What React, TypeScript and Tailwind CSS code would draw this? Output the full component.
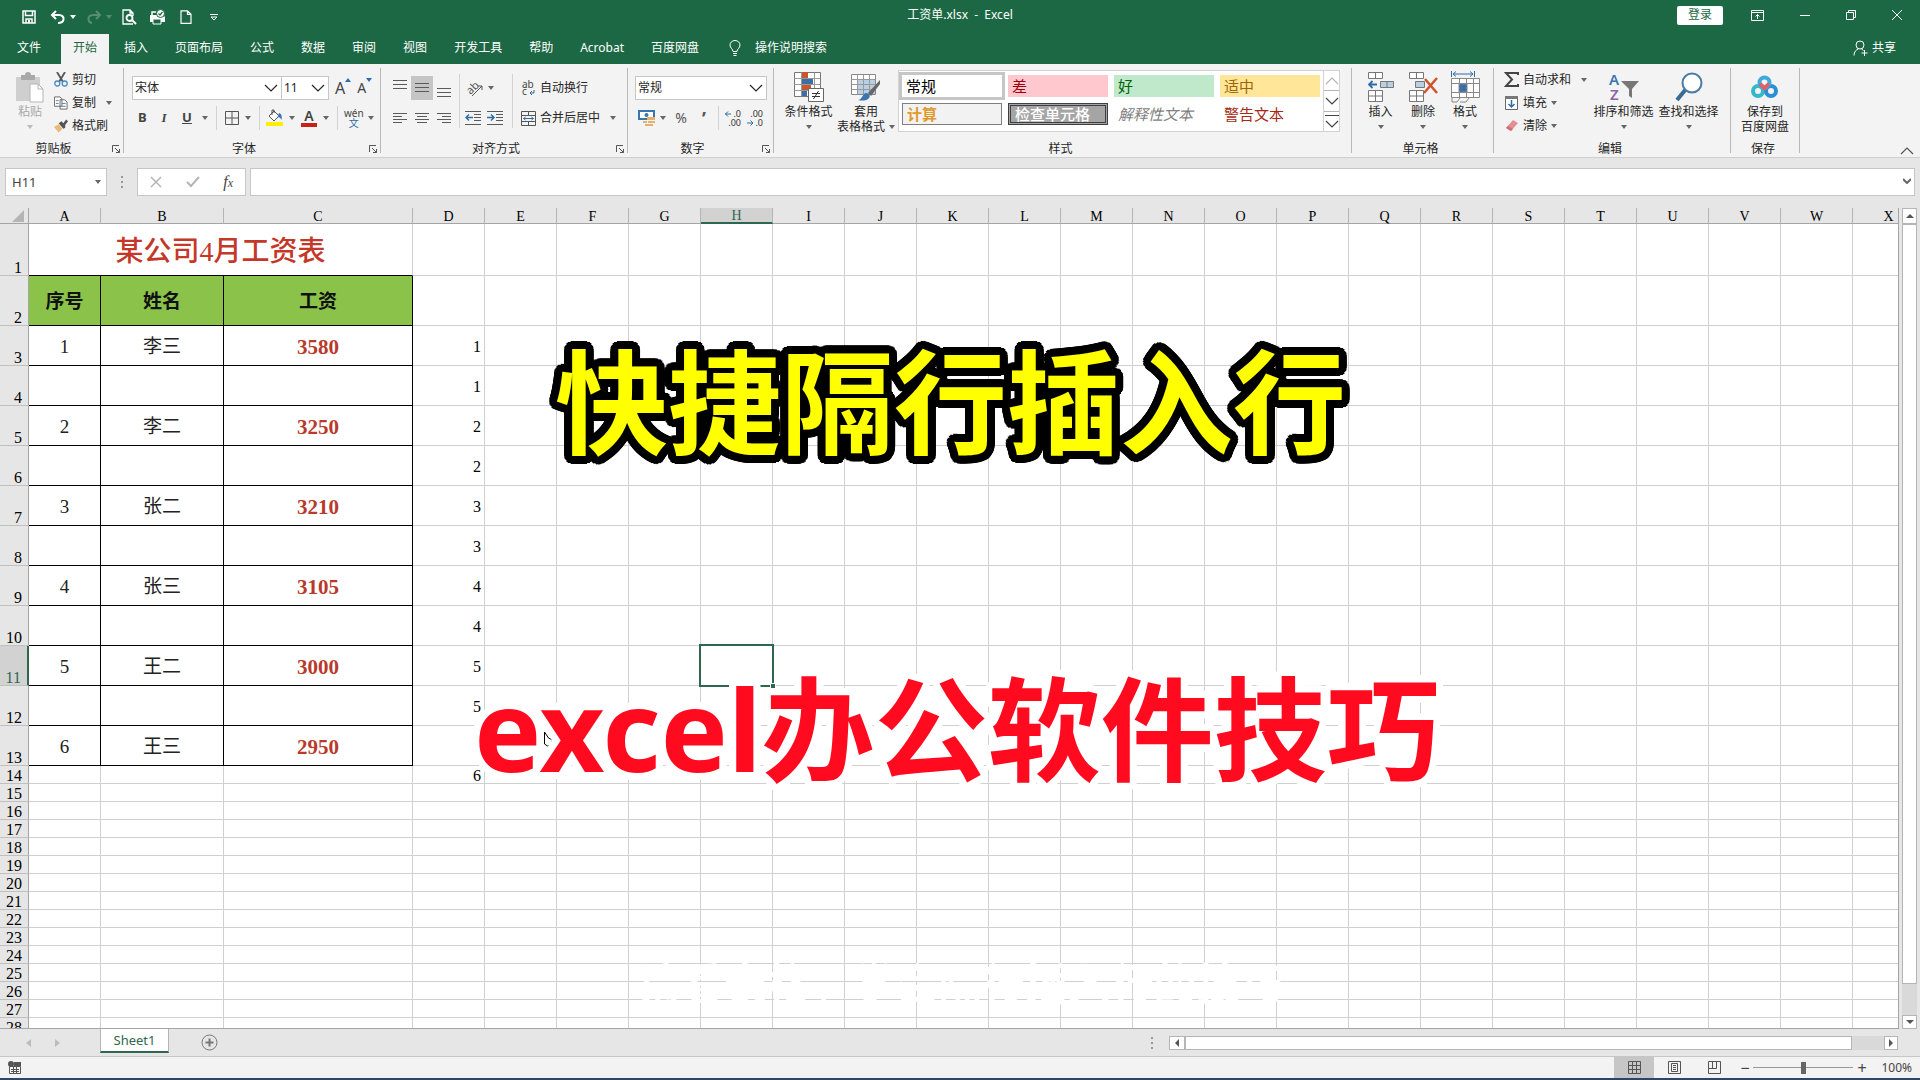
import type { ReactNode } from "react";

const MENU_TABS = ["开始", "插入", "页面布局", "公式", "数据", "审阅", "视图", "开发工具", "帮助", "Acrobat", "百度网盘"];

const COLUMNS = "ABCDEFGHIJKLMNOPQRSTUVWX".split("");
const ROWS = Array.from({ length: 28 }, (_, i) => i + 1);

const SALARIES: Record<number, [string, string, string]> = {
  3: ["1", "李三", "3580"],
  5: ["2", "李二", "3250"],
  7: ["3", "张二", "3210"],
  9: ["4", "张三", "3105"],
  11: ["5", "王二", "3000"],
  13: ["6", "王三", "2950"],
};

const HELPER: Record<number, string> = {
  3: "1", 4: "1", 5: "2", 6: "2", 7: "3", 8: "3", 9: "4", 10: "4", 11: "5", 12: "5", 13: "6", 14: "6",
};

const CELL_STYLES = [
  { label: "常规", className: "bg-white text-black outline-3 outline-[#c6c6c6]" },
  { label: "差", className: "bg-[#ffc7ce] text-[#9c0006]" },
  { label: "好", className: "bg-[#c0e8cb] text-[#006100]" },
  { label: "适中", className: "bg-[#ffe699] text-[#9c6500]" },
  { label: "计算", className: "border border-[#7f7f7f] bg-[#f2f2f2] font-bold text-[#e09a2b]" },
  { label: "检查单元格", className: "border-3 border-double border-[#3f3f3f] bg-[#a5a5a5] font-medium text-white" },
  { label: "解释性文本", className: "text-[#7f7f7f] italic" },
  { label: "警告文本", className: "text-[#a52a14]" },
];

// Rounded text outline: two rings of hard shadows around each glyph.
function outline(radius: number, color: string) {
  return [radius, radius / 2]
    .flatMap((r) =>
      Array.from({ length: 32 }, (_, i) => {
        const a = (i * Math.PI) / 16;
        return `${(Math.cos(a) * r).toFixed(1)}px ${(Math.sin(a) * r).toFixed(1)}px 0 ${color}`;
      }),
    )
    .join(",");
}

function Caret({ className = "" }: { className?: string }) {
  return (
    <svg viewBox="0 0 6 4" className={`h-1 w-1.5 shrink-0 ${className}`} fill="#666">
      <path d="M0 0h6L3 4z" />
    </svg>
  );
}

function Chevron({ up = false, className = "" }: { up?: boolean; className?: string }) {
  return (
    <svg viewBox="0 0 14 8" className={`h-2 w-3.5 shrink-0 ${className}`} fill="none" stroke="currentColor" strokeWidth="1.2">
      <path d={up ? "M1 7l6-6 6 6" : "M1 1l6 6 6-6"} />
    </svg>
  );
}

function Divider() {
  return <div className="h-6 w-px shrink-0 bg-[#d2d2d2]" />;
}

function Group({
  label,
  launcher = false,
  className,
  children,
}: {
  label: string;
  launcher?: boolean;
  className: string;
  children: ReactNode;
}) {
  return (
    <section className={`flex shrink-0 ${className}`}>
      <div className="flex min-w-0 flex-1 flex-col">
        <div className="min-h-0 flex-1">{children}</div>
        <div className="flex h-4 items-center">
          <span className="flex-1 pr-1 text-center leading-4">{label}</span>
          {launcher && (
            <button aria-label={`${label}设置`} className="mr-0.5 w-2.5">
              <svg viewBox="0 0 10 10" className="size-2.5" fill="none" stroke="#555">
                <path d="M1.5 8V1.5H8M4 4l4.500 4.500M8.500 5v3.500H5" />
              </svg>
            </button>
          )}
        </div>
      </div>
      <div className="mb-1 w-px bg-[#b8b8b8]" />
    </section>
  );
}

function BigButton({ icon, lines, caret = true, className = "" }: { icon: ReactNode; lines: string[]; caret?: boolean; className?: string }) {
  return (
    <button className={`flex shrink-0 flex-col items-center ${className}`}>
      <span className="flex h-[34px] w-8 items-center justify-center">{icon}</span>
      {lines.map((line, i) => (
        <span key={line} className="flex items-center gap-1 leading-[15px] whitespace-nowrap">
          {line}
          {caret && lines.length > 1 && i === lines.length - 1 && <Caret />}
        </span>
      ))}
      {caret && lines.length === 1 && <Caret className="mt-1.5" />}
    </button>
  );
}

function Lines({ d, label, active = false }: { d: string; label: string; active?: boolean }) {
  return (
    <button aria-label={label} className={`flex h-6 w-[22px] items-center justify-center ${active ? "bg-[#c5c5c5]" : ""}`}>
      <svg viewBox="0 0 14 20" className="h-5 w-3.5" stroke="#5a5a5a">
        <path d={d} />
      </svg>
    </button>
  );
}

function Indent({ label, flip = false }: { label: string; flip?: boolean }) {
  return (
    <button aria-label={label} className="flex w-[22px] justify-center">
      <svg viewBox="0 0 16 14" className="h-3.5 w-4" fill="none" stroke="#5a5a5a">
        <path d="M0 .5h16M9 3.500h7M9 6.500h7M9 9.500h7M0 13.500h16" />
        <path d={flip ? "M0 6.500h7M4 3.500l3 3-3 3" : "M1 6.500h7M4 3.500l-3 3 3 3"} stroke="#2f6da8" strokeWidth="1.5" />
      </svg>
    </button>
  );
}

function TitleBar() {
  return (
    <header className="grid h-[34px] grid-cols-[1fr_auto_1fr] items-center pb-1 text-white">
      <div className="flex items-center pt-1 pl-[22px]">
        <button aria-label="保存" className="mr-3.5">
          <svg viewBox="0 0 14 14" className="size-3.5" fill="none" stroke="#fff" strokeWidth="1.5">
            <path d="M1 1h12v12H1zM3.500 1v4.500h7V1M4 13V9h6v4" />
            <path d="M6 10h2v3H6z" fill="#fff" stroke="none" />
          </svg>
        </button>
        <button aria-label="撤消" className="mr-2.5 flex items-center gap-1">
          <svg viewBox="0 0 16 14" className="h-3.5 w-4" fill="none" stroke="#fff" strokeWidth="2">
            <path d="M6 1L2 5l4 4M2 5h7c3 0 5 2 4.500 4.500S11 13 8 13" />
          </svg>
          <svg viewBox="0 0 6 4" className="h-1 w-1.5" fill="#fff"><path d="M0 0h6L3 4z" /></svg>
        </button>
        <button aria-label="恢复" className="mr-2.5 flex items-center gap-1 opacity-25">
          <svg viewBox="0 0 16 14" className="h-3.5 w-4" fill="none" stroke="#fff" strokeWidth="2">
            <path d="M10 1l4 4-4 4M14 5H7C4 5 2 7 2.500 9.500S5 13 6 13" />
          </svg>
          <svg viewBox="0 0 6 4" className="h-1 w-1.5" fill="#fff"><path d="M0 0h6L3 4z" /></svg>
        </button>
        <button aria-label="打印预览" className="mr-3">
          <svg viewBox="0 0 15 16" className="h-4 w-[15px]" fill="none" stroke="#fff" strokeWidth="1.300">
            <path d="M11 15H1V1h7l3 3v3M8 1v3h3" />
            <circle cx="7.500" cy="9" r="3" strokeWidth="1.800" />
            <path d="M10 11l4 4" strokeWidth="2" />
          </svg>
        </button>
        <button aria-label="快速打印" className="mr-3.5">
          <svg viewBox="0 0 17 16" className="h-4 w-[17px]">
            <path d="M1 6h13l2 2v5H1z" fill="#fff" />
            <path d="M4 10h8v5H4z" fill="#1c6844" stroke="#fff" />
            <path d="M3 6V3h4" fill="none" stroke="#fff" strokeWidth="1.500" />
            <circle cx="11.500" cy="4.500" r="4" fill="#fff" stroke="#1c6844" />
            <path d="M9.500 4.500l1.500 1.500 2.500-3" fill="none" stroke="#1c6844" strokeWidth="1.200" />
          </svg>
        </button>
        <button aria-label="新建" className="mr-[18px]">
          <svg viewBox="0 0 12 14" className="h-3.5 w-3" fill="none" stroke="#fff" strokeWidth="1.200">
            <path d="M1 .8h6.500L11 4.300v9H1zM7.500.8v3.500H11" />
          </svg>
        </button>
        <button aria-label="自定义快速访问工具栏">
          <svg viewBox="0 0 8 7" className="h-[7px] w-2" fill="none" stroke="#fff">
            <path d="M0 .5h8M1 3l3 3 3-3z" />
          </svg>
        </button>
      </div>
      <h1 className="whitespace-pre">{"工资单.xlsx  -  Excel"}</h1>
      <div className="flex items-center justify-end pr-[18px]">
        <button className="mr-7 h-[19px] w-[46px] rounded-xs bg-white text-[#1c6844]">登录</button>
        <button aria-label="功能区显示选项" className="mr-9">
          <svg viewBox="0 0 13 11" className="h-[11px] w-[13px]" fill="none" stroke="#fff">
            <path d="M.5.5h12v10H.5zM.5 2.500h12M6.500 9V4.500M4.500 6.500l2-2 2 2" />
          </svg>
        </button>
        <button aria-label="最小化" className="mr-9">
          <svg viewBox="0 0 10 10" className="size-2.5" stroke="#fff"><path d="M0 5.500h10" /></svg>
        </button>
        <button aria-label="向下还原" className="mr-9">
          <svg viewBox="0 0 10 10" className="size-2.5" fill="none" stroke="#fff">
            <path d="M.5 2.500h7v7h-7zM2.500 2.500v-2h7v7h-2" />
          </svg>
        </button>
        <button aria-label="关闭">
          <svg viewBox="0 0 10 10" className="size-2.5" stroke="#fff"><path d="M0 0l10 10M10 0L0 10" /></svg>
        </button>
      </div>
    </header>
  );
}

function MenuBar() {
  return (
    <nav className="flex h-[30px] items-center pl-[5px] text-white">
      <button className="mr-2 h-full px-3 pb-0.5">文件</button>
      <div className="flex h-full gap-[3px]">
        {MENU_TABS.map((tab, i) => (
          <button key={tab} className={i === 0 ? "bg-[#f3f3f3] px-3 pb-0.5 text-[#1c6844]" : "px-3 pb-0.5"}>
            {tab}
          </button>
        ))}
      </div>
      <button className="ml-[18px] flex h-full items-center gap-3.5 pb-0.5">
        <svg viewBox="0 0 12 16" className="h-4 w-3" fill="none" stroke="#fff">
          <path d="M4 11.500C4 9 1 8 1 5a5 4.500 0 0 1 10 0c0 3-3 4-3 6.500zM4 13.500h4M4.500 15.500h3" />
        </svg>
        操作说明搜索
      </button>
      <button className="mr-6 ml-auto flex h-full items-center gap-1 pb-0.5">
        <svg viewBox="0 0 15 16" className="h-4 w-[15px]" fill="none" stroke="#fff">
          <circle cx="7" cy="5" r="4" />
          <path d="M1 15.500C1 12 3 9.500 5.500 9M8.500 9l2 1.500M11.500 10v6M8.500 13h6" />
        </svg>
        共享
      </button>
    </nav>
  );
}

function ClipboardGroup() {
  return (
    <Group label="剪贴板" launcher className="w-[124px]">
      <div className="flex h-full pl-3.5">
        <button className="flex w-8 flex-col items-center pt-1 text-[#a8a8a8]">
          <svg viewBox="0 0 28 30" className="h-8 w-7">
            <path d="M0 4h24v24H0z" fill="#cfcfcf" />
            <path d="M5 2h4a3 3 0 0 1 6 0h4v5H5z" fill="#a9a9a9" />
            <path d="M14 11h8l5 5v13H14z" fill="#fff" stroke="#b5b5b5" />
            <path d="M22 11v5h5" fill="none" stroke="#b5b5b5" />
          </svg>
          <span className="leading-[15px]">粘贴</span>
          <Caret className="mt-1.5 opacity-40" />
        </button>
        <div className="ml-2 flex flex-col">
          <button className="flex h-[23px] items-center gap-1">
            <svg viewBox="0 0 14 15" className="h-[15px] w-3.5" fill="none">
              <path d="M3 0l6 10M11 0L5 10" stroke="#555" strokeWidth="1.800" />
              <circle cx="3.300" cy="11.500" r="2.500" stroke="#4a8cc4" strokeWidth="1.300" />
              <circle cx="10.700" cy="11.500" r="2.500" stroke="#4a8cc4" strokeWidth="1.300" />
            </svg>
            剪切
          </button>
          <button className="flex h-[23px] items-center gap-1">
            <svg viewBox="0 0 15 14" className="h-3.5 w-3.5" fill="#fff" stroke="#666">
              <path d="M.5.500h6l2 2v8h-8zM6.500 3.500h5l2.500 2.500v7.500H6.500z" />
              <path d="M2 4.500h3M2 7.500h3M8.500 7.500h4M8.500 10.500h4" stroke="#4a7db0" />
            </svg>
            复制
            <Caret className="ml-1.5" />
          </button>
          <button className="flex h-[23px] items-center gap-1">
            <svg viewBox="0 0 15 14" className="h-3.5 w-3.5">
              <path d="M0 8l5-3 4 5-4 4z" fill="#e9b97a" />
              <path d="M5 4l3-2 2 2 3-4 2 2-3 4 0 3-2 1z" fill="#555" />
            </svg>
            格式刷
          </button>
        </div>
      </div>
    </Group>
  );
}

function FontGroup() {
  return (
    <Group label="字体" launcher className="w-[257px]">
      <div className="flex h-[35px] items-center pt-1 pl-2">
        <div className="relative">
          <select aria-label="字体" className="block h-6 w-[150px] appearance-none border border-[#c6c6c6] bg-white pl-0.5 text-xs">
            <option>宋体</option>
          </select>
          <Chevron className="pointer-events-none absolute top-2 right-1" />
        </div>
        <div className="relative">
          <select aria-label="字号" className="-ml-px block h-6 w-12 appearance-none border border-[#c6c6c6] bg-white pl-0.5 text-xs">
            <option>11</option>
          </select>
          <Chevron className="pointer-events-none absolute top-2 right-1" />
        </div>
        <button aria-label="增大字号" className="ml-1.5 flex text-base leading-5 text-[#444]">
          A
          <svg viewBox="0 0 6 4" className="h-1 w-1.5" fill="#2f6da8"><path d="M0 4h6L3 0z" /></svg>
        </button>
        <button aria-label="减小字号" className="ml-1.5 flex text-sm leading-5 text-[#444]">
          A
          <svg viewBox="0 0 6 4" className="h-1 w-1.5" fill="#2f6da8"><path d="M0 0h6L3 4z" /></svg>
        </button>
      </div>
      <div className="flex h-[30px] items-center pl-3.5 text-[13px] text-[#444]">
        <button aria-label="加粗" className="w-2 font-bold">B</button>
        <button aria-label="倾斜" className="ml-3.5 w-2 font-['Liberation_Serif',serif] font-bold italic">I</button>
        <button aria-label="下划线" className="ml-3.5 w-2.5 font-bold underline">U</button>
        <Caret className="mr-2 ml-2.5" />
        <Divider />
        <button aria-label="边框" className="ml-2 flex items-center gap-1.5">
          <svg viewBox="0 0 14 14" className="size-3.5" fill="none" stroke="#555">
            <path d="M.5.500h13v13H.5zM7 .5v13M.5 7h13" />
          </svg>
          <Caret />
        </button>
        <div className="ml-2"><Divider /></div>
        <button aria-label="填充颜色" className="ml-1.5 flex items-center gap-1.5">
          <svg viewBox="0 0 17 18" className="h-[18px] w-[17px]">
            <path d="M3 7l5-5 5 5-5 5z" fill="#fff" stroke="#555" />
            <path d="M6 6V1h2v3" fill="none" stroke="#555" />
            <path d="M13 4c3 1 3 4 2.500 7-1-2-2-3-4-3z" fill="#3a75b0" />
            <path d="M0 13h17v4H0z" fill="#ffee00" />
          </svg>
          <Caret />
        </button>
        <button aria-label="字体颜色" className="ml-1.5 flex items-center gap-1.5">
          <span className="w-4 border-b-4 border-[#c8201a] text-center text-sm leading-[14px] font-semibold">A</span>
          <Caret />
        </button>
        <div className="ml-2"><Divider /></div>
        <button aria-label="拼音指南" className="ml-1.5 flex items-center gap-1">
          <span className="flex flex-col text-[10px] leading-[10px]">
            wén<span className="text-[#2f6da8]">文</span>
          </span>
          <Caret />
        </button>
      </div>
    </Group>
  );
}

function AlignGroup() {
  return (
    <Group label="对齐方式" launcher className="w-[247px]">
      <div className="flex h-full pl-2">
        <div className="flex w-[70px] flex-col">
          <div className="flex h-[35px] items-center pt-1">
            <Lines label="顶端对齐" d="M0 2.500h14M0 6.500h14M0 10.500h14" />
            <Lines label="垂直居中" active d="M0 5.500h14M0 9.500h14M0 13.500h14" />
            <Lines label="底端对齐" d="M0 10.500h14M0 14.500h14M0 18.500h14" />
          </div>
          <div className="flex h-[30px] items-center">
            <Lines label="左对齐" d="M0 5.500h14M0 8.500h9M0 11.500h14M0 14.500h9" />
            <Lines label="居中" d="M0 5.500h14M2 8.500h10M0 11.500h14M2 14.500h10" />
            <Lines label="右对齐" d="M0 5.500h14M5 8.500h9M0 11.500h14M5 14.500h9" />
          </div>
        </div>
        <div className="mt-1.5 h-[54px] w-px bg-[#d2d2d2]" />
        <div className="flex w-[52px] flex-col pl-0.5">
          <button aria-label="方向" className="flex h-[35px] items-center gap-1 pt-1 pl-1">
            <svg viewBox="0 0 18 16" className="h-4 w-[18px] overflow-visible" fill="none" stroke="#555">
              <text x="0" y="12" transform="rotate(-45 6 8)" fontSize="11" fill="#555" stroke="none">ab</text>
              <path d="M6 16L16 6M12 6h4v4" />
            </svg>
            <Caret />
          </button>
          <div className="flex h-[30px] items-center">
            <Indent label="减少缩进量" />
            <Indent label="增加缩进量" flip />
          </div>
        </div>
        <div className="mt-1.5 h-[54px] w-px bg-[#d2d2d2]" />
        <div className="flex flex-col pl-2">
          <button className="flex h-[35px] items-center gap-1 pt-1">
            <svg viewBox="0 0 15 16" className="h-4 w-[15px] overflow-visible" fill="none" stroke="#2f6da8">
              <text x="1" y="8" fontSize="10" fill="#444" stroke="none">ab</text>
              <text x="1" y="15" fontSize="10" fill="#444" stroke="none">c</text>
              <path d="M13 10v3H9M11 11l-2 2 2 2" />
            </svg>
            自动换行
          </button>
          <button className="flex h-[30px] items-center gap-1">
            <svg viewBox="0 0 15 15" className="size-[15px]" fill="none" stroke="#555">
              <path d="M.5.500h14v14H.5zM.5 4.500h14M.5 10.500h14M7.500.500v4M7.500 10.500v4" />
              <path d="M2.500 7.500h10M4.500 6l-2 1.500 2 1.500M10.500 6l2 1.500-2 1.500" stroke="#2f6da8" />
            </svg>
            合并后居中
            <Caret className="ml-1.5" />
          </button>
        </div>
      </div>
    </Group>
  );
}

function Decimals({ label, top, bottom, grow = false }: { label: string; top: string; bottom: string; grow?: boolean }) {
  return (
    <button aria-label={label} className="w-[22px]">
      <svg viewBox="0 0 16 16" className="size-4 overflow-visible" fill="none" stroke="#2f6da8">
        <text x="16" y="7" textAnchor="end" fontSize="9" fill="#333" stroke="none">{top}</text>
        <text x="16" y="16" textAnchor="end" fontSize="9" fill="#333" stroke="none">{bottom}</text>
        <path d={grow ? "M0 4h6M3 1.500L.5 4 3 6.500" : "M0 13h6M3.500 10.500L6 13l-2.500 2.500"} />
      </svg>
    </button>
  );
}

function NumberGroup() {
  return (
    <Group label="数字" launcher className="w-[146px]">
      <div className="flex h-[35px] items-center pt-1 pl-[7px]">
        <div className="relative">
          <select aria-label="数字格式" className="block h-6 w-[132px] appearance-none border border-[#c6c6c6] bg-white pl-0.5 text-xs">
            <option>常规</option>
          </select>
          <Chevron className="pointer-events-none absolute top-2 right-1" />
        </div>
      </div>
      <div className="flex h-[30px] items-center pl-2.5">
        <button aria-label="会计数字格式" className="mr-2 flex items-center gap-1">
          <svg viewBox="0 0 18 16" className="h-4 w-[18px]">
            <path d="M1 1h15v8H1z" fill="#fff" stroke="#3a75b0" strokeWidth="2" />
            <circle cx="8.500" cy="5" r="2" fill="#3a75b0" />
            <path d="M9 7h8v3H9zM10 11h7v2h-7zM5 11h4v2H5zM7 14h8v2H7z" fill="#e5b06c" />
          </svg>
          <Caret />
        </button>
        <button aria-label="百分比样式" className="w-3.5 text-sm text-[#555]">%</button>
        <button aria-label="千位分隔样式" className="ml-3 w-2 text-lg leading-4 font-bold text-[#555]">’</button>
        <div className="mr-1.5 ml-2.5"><Divider /></div>
        <Decimals label="增加小数位数" top=".0" bottom=".00" grow />
        <Decimals label="减少小数位数" top=".00" bottom=".0" />
      </div>
    </Group>
  );
}

function StylesGroup() {
  return (
    <Group label="样式" className="w-[578px]">
      <div className="flex h-full pl-2">
        <BigButton
          className="mt-0.5 w-[53px]"
          lines={["条件格式"]}
          icon={
            <svg viewBox="0 0 30 30" className="size-[30px]">
              <path d="M.5.500h26v24H.5z" fill="#fff" stroke="#777" />
              <path d="M8 0h6v6H8zM8 12h9v6H8z" fill="#c9572c" />
              <path d="M8 6h11v6H8zM8 18h5v6H8z" fill="#3a6fa8" />
              <path d="M.5 6.500h26M.5 12.500h26M.5 18.500h26M7.500.500v24M20.500.500v24" stroke="#999" fill="none" />
              <path d="M14.500 16.500h15v13h-15z" fill="#fff" stroke="#666" />
              <path d="M18 21.500h8M18 24.500h8M24.500 19l-5 8" stroke="#333" />
            </svg>
          }
        />
        <BigButton
          className="mt-0.5 w-[62px]"
          lines={["套用", "表格格式"]}
          icon={
            <svg viewBox="0 0 30 30" className="size-[30px]">
              <path d="M.5 2.500h24v20H.5z" fill="#fff" stroke="#888" />
              <path d="M7 8h17v14H7z" fill="#b9cfe4" />
              <path d="M.5 7.500h24M.5 12.500h24M.5 17.500h24M6.500 2.500v20M12.500 2.500v20M18.500 2.500v20" stroke="#999" fill="none" />
              <path d="M29 8L17 21l3 3 9-12z" fill="#666" />
              <path d="M7 28c4 0 4-6 8-7 3 0 5 3 3 5-2 3-7 3-11 2z" fill="#3a75b0" />
            </svg>
          }
        />
        <div className="mt-0.5 ml-px flex h-[62px] border border-[#d2d2d2] bg-white">
          <div className="grid grid-cols-[repeat(4,100px)] grid-rows-[repeat(2,22px)] gap-x-1.5 gap-y-1.5 px-[3px] pt-1">
            {CELL_STYLES.map((s) => (
              <button key={s.label} className={`flex items-center pl-1 text-[15px] leading-4 ${s.className}`}>
                {s.label}
              </button>
            ))}
          </div>
          <div className="flex w-4 flex-col border-l border-[#d2d2d2] text-[#444]">
            <button aria-label="上一行" className="flex flex-1 items-center justify-center text-[#b5b5b5]"><Chevron up /></button>
            <button aria-label="下一行" className="flex flex-1 items-center justify-center border-y border-[#b5b5b5]"><Chevron /></button>
            <button aria-label="其他" className="flex flex-1 flex-col items-center justify-center gap-1">
              <span className="h-px w-3.5 bg-[#444]" />
              <Chevron />
            </button>
          </div>
        </div>
      </div>
    </Group>
  );
}

function CellsGroup() {
  return (
    <Group label="单元格" className="w-[142px]">
      <div className="flex h-full justify-center pt-0.5">
        <BigButton
          className="w-[43px]"
          lines={["插入"]}
          icon={
            <svg viewBox="0 0 26 30" className="h-[30px] w-[26px]" fill="#fff" stroke="#777">
              <path d="M.5.500h14v6H.5zM7.500.500v6M.5 18.500h14v11H.5zM7.500 18.500v11M.5 24h14" />
              <path d="M12.500 9.500h13v6h-13zM19 9.500v6" fill="#b9cfe4" />
              <path d="M1 12.500h8M4.500 9L1 12.500 4.500 16" fill="none" stroke="#2f6da8" strokeWidth="1.800" />
            </svg>
          }
        />
        <BigButton
          className="w-[42px]"
          lines={["删除"]}
          icon={
            <svg viewBox="0 0 29 30" className="h-[30px] w-[29px]" fill="#fff" stroke="#777">
              <path d="M.5.500h14v6H.5zM7.500.500v6M.5 18.500h14v11H.5zM7.500 18.500v11M.5 24h14" />
              <path d="M6.500 9.500h9v6h-9z" fill="#b9cfe4" />
              <path d="M16 7l12 14M28 6L15 21" stroke="#d0532c" strokeWidth="2.500" />
            </svg>
          }
        />
        <BigButton
          className="w-[42px]"
          lines={["格式"]}
          icon={
            <svg viewBox="0 0 29 32" className="h-8 w-[29px]" fill="#fff" stroke="#888">
              <path d="M.5 0v6M23.500 0v6M2 3h20M5 .5L2 3l3 2.500M19 .5L22 3l-3 2.500" fill="none" stroke="#2f6da8" />
              <path d="M.5 7.500h28v19H.5zM.5 12.500h28M.5 21.500h28M8.500 7.500v19M15.500 7.500v19M22.500 7.500v19" />
              <path d="M8 13h8v8H8z" fill="#3a6fa8" />
              <path d="M1 27v4h5l3-4M9 31h6l3-4" fill="none" />
            </svg>
          }
        />
      </div>
    </Group>
  );
}

function EditGroup() {
  return (
    <Group label="编辑" className="w-[237px]">
      <div className="flex h-full pl-2.5">
        <div className="flex w-[87px] flex-col">
          <button className="flex h-[23px] items-center gap-1">
            <svg viewBox="0 0 15 15" className="size-[15px]" fill="none" stroke="#444" strokeWidth="2">
              <path d="M14 3V1H2l6 6.500L2 14h12v-2" />
            </svg>
            自动求和
            <Caret className="ml-1.5" />
          </button>
          <button className="flex h-[23px] items-center gap-1">
            <svg viewBox="0 0 15 15" className="size-[15px]" fill="#fff" stroke="#666">
              <path d="M1.500 1.500h12v13h-12z" />
              <path d="M1 1h13v3H1z" fill="#777" stroke="none" />
              <path d="M7.500 5v7M4.500 9l3 3 3-3" fill="none" stroke="#2f6da8" strokeWidth="1.500" />
            </svg>
            填充
            <Caret />
          </button>
          <button className="flex h-[23px] items-center gap-1">
            <svg viewBox="0 0 15 15" className="size-[15px]">
              <path d="M2 10l7-8 5 3-7 8z" fill="#e58f95" />
              <path d="M2 10l2-2 5 3-2 2z" fill="#cf6f78" />
            </svg>
            清除
            <Caret />
          </button>
        </div>
        <BigButton
          className="w-[65px] pt-0.5"
          lines={["排序和筛选"]}
          icon={
            <svg viewBox="0 0 30 30" className="size-[30px] overflow-visible">
              <text x="0" y="13" fontSize="15" fontWeight="600" fill="#3a75b0">A</text>
              <text x="1" y="28" fontSize="15" fontWeight="600" fill="#8b62a8">Z</text>
              <path d="M12 9h18l-7 8v9l-3-2v-7z" fill="#777" />
            </svg>
          }
        />
        <BigButton
          className="w-[65px] pt-0.5"
          lines={["查找和选择"]}
          icon={
            <svg viewBox="0 0 28 30" className="h-[30px] w-7">
              <path d="M11 17L2 28" stroke="#3c6a94" strokeWidth="4" />
              <circle cx="17" cy="11" r="9.500" fill="#fff" stroke="#4a7ba5" strokeWidth="2" />
            </svg>
          }
        />
      </div>
    </Group>
  );
}

function SaveGroup() {
  return (
    <Group label="保存" className="w-[69px]">
      <div className="flex h-full justify-center pt-0.5">
        <BigButton
          caret={false}
          lines={["保存到", "百度网盘"]}
          icon={
            <svg viewBox="0 0 27 24" className="h-6 w-[27px]" fill="none" strokeWidth="4">
              <circle cx="7" cy="16" r="5" stroke="#35b8c8" />
              <circle cx="20" cy="16" r="5" stroke="#2a8fd8" />
              <circle cx="13.500" cy="7.500" r="5" stroke="#3fa9dc" />
              <path d="M9 9l4.500 4L18 9" stroke="#e0606a" />
            </svg>
          }
        />
      </div>
    </Group>
  );
}

function Ribbon() {
  return (
    <div className="flex h-[94px] border-b border-[#cfcfcf] bg-[#f3f3f3] pt-1 text-[#262626]">
      <ClipboardGroup />
      <FontGroup />
      <AlignGroup />
      <NumberGroup />
      <StylesGroup />
      <CellsGroup />
      <EditGroup />
      <SaveGroup />
      <button aria-label="折叠功能区" className="mr-1.5 mb-0.5 ml-auto self-end text-[#555]">
        <Chevron up />
      </button>
    </div>
  );
}

function FormulaBar() {
  return (
    <div className="flex h-[50px] items-start bg-[#e6e6e6] px-[5px] pt-2.5 text-[#444]">
      <div className="relative">
        <input aria-label="名称框" defaultValue="H11" className="block h-7 w-[102px] border border-[#c6c6c6] bg-white pl-1.5 text-[13px]" />
        <Caret className="absolute top-3 right-1.5" />
      </div>
      <svg viewBox="0 0 2 12" className="mx-3.5 mt-2 h-3 w-0.5" fill="#999">
        <path d="M0 0h2v2H0zM0 5h2v2H0zM0 10h2v2H0z" />
      </svg>
      <div className="mr-1 flex h-7 w-[109px] items-center justify-between border border-[#c6c6c6] bg-white pr-3 pl-3">
        <button aria-label="取消">
          <svg viewBox="0 0 12 12" className="size-3" stroke="#b5b5b5" strokeWidth="1.500"><path d="M1 1l10 10M11 1L1 11" /></svg>
        </button>
        <button aria-label="输入">
          <svg viewBox="0 0 14 12" className="h-3 w-3.5" fill="none" stroke="#b5b5b5" strokeWidth="2"><path d="M1 6l4 4 8-9" /></svg>
        </button>
        <button aria-label="插入函数" className="font-['Liberation_Serif',serif] text-base leading-4 italic">
          f<span className="text-xs">x</span>
        </button>
      </div>
      <div className="relative flex-1">
        <input aria-label="编辑栏" className="block h-7 w-full border border-[#c6c6c6] bg-white px-2" />
        <svg viewBox="0 0 8 6" className="absolute top-2.5 right-1 h-1.5 w-2" fill="none" stroke="#666" strokeWidth="2">
          <path d="M0 1l4 4 4-4" />
        </svg>
      </div>
    </div>
  );
}

function columnWidth(col: string) {
  if (col === "B") return "w-[123px]";
  if (col === "C") return "w-[189px]";
  return "w-[72px]";
}

function rowHeight(row: number) {
  if (row === 1) return "h-[52px]";
  if (row === 2) return "h-[50px]";
  return row < 14 ? "h-10" : "h-[18px]";
}

function SheetCell({ row, col }: { row: number; col: string }) {
  const index = COLUMNS.indexOf(col);

  if (row <= 13 && index < 3) {
    if (row === 2) {
      return (
        <td className="border-r border-b border-black bg-[#8bc34a] p-0 pt-0.5 text-center text-[19px] leading-6 font-bold text-[#111]">
          {["序号", "姓名", "工资"][index]}
        </td>
      );
    }
    return (
      <td
        className={
          index === 2
            ? "border-r border-b border-black p-0 pt-0.5 text-center text-[21px] leading-6 font-bold text-[#b93a2b]"
            : "border-r border-b border-black p-0 pt-0.5 text-center text-[19px] leading-6 text-[#222]"
        }
      >
        {SALARIES[row]?.[index]}
      </td>
    );
  }

  if (row === 11 && col === "H") {
    return (
      <td className="relative border-r border-b border-[#d0d0d0] p-0">
        <div className="absolute -inset-0.5 border-2 border-[#2f6650]" />
        <div className="absolute -right-1 -bottom-1 size-1.5 border border-white bg-[#2f6650]" />
      </td>
    );
  }

  return (
    <td className="border-r border-b border-[#d0d0d0] p-0 pt-0.5 pr-[3px] text-right text-base leading-[14px] text-black">
      {col === "D" ? HELPER[row] : null}
    </td>
  );
}

function Sheet() {
  return (
    <table className="w-[1925px] table-fixed border-separate border-spacing-0 bg-white font-['Liberation_Serif','Noto_Sans_CJK_SC',serif]">
      <colgroup>
        <col className="w-[29px]" />
        {COLUMNS.map((col) => (
          <col key={col} className={columnWidth(col)} />
        ))}
      </colgroup>
      <thead>
        <tr className="h-4 bg-[#e6e6e6] text-sm leading-[13px] text-black">
          <th className="border-r border-b border-[#a5a5a5] p-0">
            <svg viewBox="0 0 12 12" className="ml-3 size-3" fill="#b5b5b5"><path d="M12 0v12H0z" /></svg>
          </th>
          {COLUMNS.map((col) => (
            <th
              key={col}
              className={
                col === "H"
                  ? "border-r border-b-2 border-r-[#b5b5b5] border-b-[#2f6650] bg-[#d2d2d2] p-0 pt-px font-normal text-[#2f6650]"
                  : "border-r border-b border-r-[#b5b5b5] border-b-[#a5a5a5] p-0 pt-px font-normal"
              }
            >
              {col}
            </th>
          ))}
        </tr>
      </thead>
      <tbody>
        {ROWS.map((row) => (
          <tr key={row} className={rowHeight(row)}>
            <th
              className={
                row === 11
                  ? "border-r-2 border-b border-r-[#2f6650] border-b-[#c0c0c0] bg-[#d2d2d2] p-0 pr-1.5 text-right align-bottom text-base leading-[14px] font-normal text-[#2f6650]"
                  : "border-r border-b border-r-[#a5a5a5] border-b-[#c0c0c0] bg-[#e6e6e6] p-0 pr-1.5 text-right align-bottom text-base leading-[14px] font-normal text-black"
              }
            >
              {row}
            </th>
            {row === 1 && (
              <td colSpan={3} className="border-r border-b border-r-[#d0d0d0] border-b-black p-0 pt-1 text-center text-[28px] leading-8 font-medium text-[#c4382a]">
                某公司4月工资表
              </td>
            )}
            {COLUMNS.slice(row === 1 ? 3 : 0).map((col) => (
              <SheetCell key={col} row={row} col={col} />
            ))}
          </tr>
        ))}
      </tbody>
    </table>
  );
}

function ScrollArrow({ label, d, className }: { label: string; d: string; className: string }) {
  return (
    <button aria-label={label} className={`flex shrink-0 items-center justify-center border border-[#b5b5b5] bg-white ${className}`}>
      <svg viewBox="0 0 8 8" className="size-2" fill="#555"><path d={d} /></svg>
    </button>
  );
}

function SheetTabs() {
  return (
    <div className="flex h-7 shrink-0 border-b border-[#c6c6c6] bg-[#e6e6e6]">
      <div className="flex w-[100px] items-center gap-6 pl-[26px]">
        <button aria-label="上一张工作表"><svg viewBox="0 0 5 8" className="h-2 w-[5px]" fill="#bdbdbd"><path d="M5 0v8L0 4z" /></svg></button>
        <button aria-label="下一张工作表"><svg viewBox="0 0 5 8" className="h-2 w-[5px]" fill="#bdbdbd"><path d="M0 0v8l5-4z" /></svg></button>
      </div>
      <button className="mb-[3px] w-[69px] border-x border-b-2 border-x-[#b5b5b5] border-b-[#2f6650] bg-white pt-0.5 text-[13px] text-[#2f6650]">
        Sheet1
      </button>
      <button aria-label="新工作表" className="ml-8">
        <svg viewBox="0 0 17 17" className="size-[17px]" fill="none" stroke="#777">
          <circle cx="8.500" cy="8.500" r="7.500" />
          <path d="M8.500 4.500v8M4.500 8.500h8" strokeWidth="2" />
        </svg>
      </button>
      <div className="mr-[22px] ml-auto flex w-[39%] items-center">
        <svg viewBox="0 0 2 12" className="mr-4 ml-0.5 h-3 w-0.5 shrink-0" fill="#999">
          <path d="M0 0h2v2H0zM0 5h2v2H0zM0 10h2v2H0z" />
        </svg>
        <ScrollArrow label="向左滚动" d="M6 0v8L2 4z" className="h-3.5 w-4" />
        <div className="h-3.5 flex-1 bg-[#d9d9d9] pr-8">
          <div className="h-full border border-[#b5b5b5] bg-white" />
        </div>
        <ScrollArrow label="向右滚动" d="M2 0v8l4-4z" className="h-3.5 w-3.5" />
      </div>
    </div>
  );
}

function StatusBar() {
  return (
    <footer className="flex h-[23px] shrink-0 items-center border-b-2 border-[#2c4763] bg-[#f3f3f3] text-[#444]">
      <button aria-label="录制宏" className="ml-2">
        <svg viewBox="0 0 13 13" className="size-[13px]" fill="none" stroke="#555">
          <path d="M1.500 5.500h11v7h-11zM3 8.500h8M3 10.500h8M5.500 6v6M8.500 6v6" />
          <path d="M6 1h7v4H6z" fill="#555" stroke="none" />
          <circle cx="3" cy="3" r="3" fill="#555" stroke="none" />
        </svg>
      </button>
      <button aria-label="普通视图" className="ml-auto flex h-full w-10 items-center justify-center bg-[#c6c6c6]">
        <svg viewBox="0 0 13 13" className="size-[13px]" fill="none" stroke="#555">
          <path d="M.5.500h12v12H.5zM4.500.500v12M8.500.500v12M.5 4.500h12M.5 8.500h12" />
        </svg>
      </button>
      <button aria-label="页面布局视图" className="flex w-10 justify-center">
        <svg viewBox="0 0 13 13" className="size-[13px]" fill="none" stroke="#555">
          <path d="M.5.500h12v12H.5zM3.500 2.500h6v8h-6zM5 4.500h3M5 6.500h3M5 8.500h3" />
        </svg>
      </button>
      <button aria-label="分页预览" className="flex w-10 justify-center">
        <svg viewBox="0 0 13 13" className="size-[13px]" fill="none" stroke="#555">
          <path d="M.5.500h12v12H.5zM4.500.500v7M8.500.500v7M.5 7.500h8" />
        </svg>
      </button>
      <button aria-label="缩小" className="ml-1 w-3.5 text-base leading-4">−</button>
      <input
        type="range"
        aria-label="显示比例"
        min={10}
        max={190}
        defaultValue={100}
        className="mx-px h-4 w-[100px] appearance-none bg-[linear-gradient(#999,#999)] bg-[length:100%_1px] bg-center bg-no-repeat [&::-webkit-slider-thumb]:h-3 [&::-webkit-slider-thumb]:w-[5px] [&::-webkit-slider-thumb]:appearance-none [&::-webkit-slider-thumb]:bg-[#666]"
      />
      <button aria-label="放大" className="w-4 text-base leading-4">+</button>
      <span className="mr-2 ml-2.5 w-8 text-right">100%</span>
    </footer>
  );
}

function Captions() {
  return (
    <div className="pointer-events-none absolute inset-0 overflow-hidden text-center font-['Noto_Sans_CJK_SC',sans-serif] font-bold whitespace-nowrap">
      <svg viewBox="0 0 10 16" className="absolute top-[731px] left-[543px] h-4 w-2.5" fill="#fff" stroke="#000">
        <path d="M1.500 1v12l3 2h3l2-6-4-2-4-6z" />
      </svg>
      <p
        className="absolute top-[316px] left-[555px] text-[113px] leading-40 text-[#ffff00]"
        style={{ textShadow: outline(8, "#000") }}
      >
        快捷隔行插入行
      </p>
      <p
        className="absolute top-[648px] left-[474px] font-['Noto_Sans','Noto_Sans_CJK_SC',sans-serif] text-[113px] leading-40 text-[#ff0a1e]"
        style={{ textShadow: outline(7, "#fff") }}
      >
        excel办公软件技巧
      </p>
      <p className="absolute inset-x-0 top-[949px] text-[43px] leading-16 text-white">请看表格，学会隔行插入行的技巧</p>
    </div>
  );
}

export default function App() {
  return (
    <div className="relative flex h-screen flex-col overflow-hidden bg-[#1c6844] font-['Noto_Sans','Noto_Sans_CJK_SC',sans-serif] text-xs">
      <TitleBar />
      <MenuBar />
      <Ribbon />
      <FormulaBar />
      <main className="flex min-h-0 flex-1 bg-[#e6e6e6]">
        <div className="min-w-0 flex-1 overflow-hidden border-r border-b border-[#a5a5a5]">
          <Sheet />
        </div>
        <div className="mr-[3px] ml-[3px] flex w-[15px] flex-col bg-[#d9d9d9]">
          <ScrollArrow label="向上滚动" d="M0 6h8L4 2z" className="h-4 w-full" />
          <div className="mb-[31px] flex-1 border border-[#b5b5b5] bg-white" />
          <ScrollArrow label="向下滚动" d="M0 2h8L4 6z" className="h-3.5 w-full" />
        </div>
      </main>
      <SheetTabs />
      <StatusBar />
      <Captions />
    </div>
  );
}
